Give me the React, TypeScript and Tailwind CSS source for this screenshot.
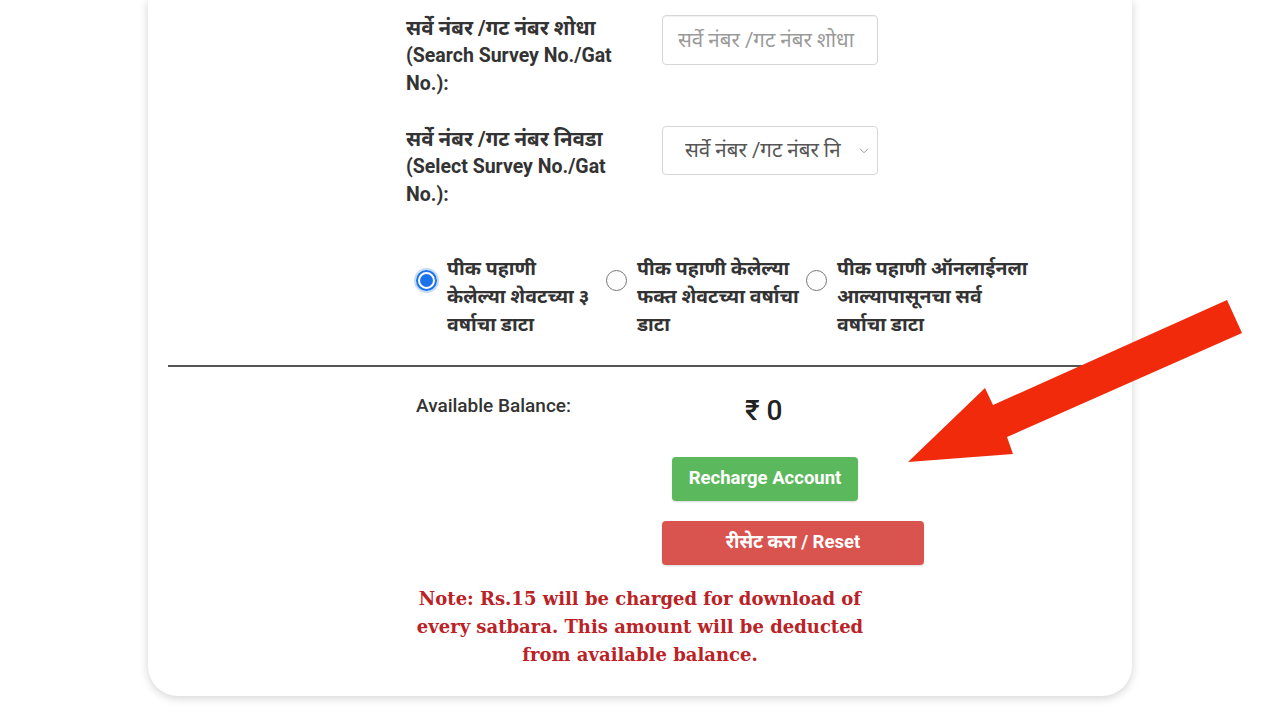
import { ChevronDown } from "lucide-react";

const font = "font-['Roboto','Noto_Sans',sans-serif]";

function Radio({ checked, lines }: { checked?: boolean; lines: string[] }) {
    return (
        <label className="flex flex-row items-start gap-[10px]">
            {checked ? (
                <span className="shrink-0 mt-[15px] w-[21px] h-[21px] rounded-full border-2 border-[#1a73e8] flex items-center justify-center shadow-[0_0_0_2px_#c6dbf7]">
                    <span className="w-[13px] h-[13px] rounded-full bg-[#1a73e8]" />
                </span>
            ) : (
                <span className="shrink-0 mt-[15px] w-[21px] h-[21px] rounded-full border border-[#777] bg-white" />
            )}
            <span className="text-[19.5px] leading-[28px] font-bold text-[#333] whitespace-nowrap">
                {lines.map((l, i) => (
                    <span key={i} className="block">{l}</span>
                ))}
            </span>
        </label>
    );
}

export default function App() {
    return (
        <div className={`relative w-[1280px] h-[720px] overflow-hidden bg-white ${font}`}>
            <div className="mx-auto w-[984px] h-[696px] bg-white rounded-b-[30px] shadow-[0_2px_10px_rgba(0,0,0,0.18)] flex flex-col">
                <div className="flex flex-col gap-[27px] pl-[258px] pt-[14px]">
                    <div className="flex flex-row items-start">
                        <div className="w-[256px] text-[19.5px] leading-[28px] font-bold text-[#333] whitespace-nowrap">
                            <span className="block text-[20.5px]">सर्वे नंबर /गट नंबर शोधा</span>
                            <span className="block">(Search Survey No./Gat</span>
                            <span className="block">No.):</span>
                        </div>
                        <div className="mt-[1px] w-[216px] h-[50px] border border-[#d6d6d6] rounded-[4px] flex items-center px-[15px] text-[20.5px] text-[#9a9a9a] shadow-[inset_0_1px_1px_rgba(0,0,0,0.06)] whitespace-nowrap overflow-hidden">
                            सर्वे नंबर /गट नंबर शोधा
                        </div>
                    </div>
                    <div className="flex flex-row items-start">
                        <div className="w-[256px] text-[19.5px] leading-[28px] font-bold text-[#333] whitespace-nowrap">
                            <span className="block text-[20.5px]">सर्वे नंबर /गट नंबर निवडा</span>
                            <span className="block">(Select Survey No./Gat</span>
                            <span className="block">No.):</span>
                        </div>
                        <div className="mt-[1px] w-[216px] h-[49px] border border-[#d6d6d6] rounded-[4px] flex items-center pl-[22px] pr-[6px] text-[20.5px] text-[#555] whitespace-nowrap overflow-hidden">
                            <span className="flex-1 overflow-hidden">सर्वे नंबर /गट नंबर नि</span>
                            <ChevronDown size={14} strokeWidth={1.5} className="text-[#888] shrink-0" />
                        </div>
                    </div>
                </div>

                <div className="flex flex-row gap-[14px] pl-[268px] mt-[46px]">
                    <div className="w-[176px] shrink-0"><Radio checked lines={["पीक पहाणी", "केलेल्या शेवटच्या ३", "वर्षाचा डाटा"]} /></div>
                    <div className="w-[186px] shrink-0"><Radio lines={["पीक पहाणी केलेल्या", "फक्त शेवटच्या वर्षाचा", "डाटा"]} /></div>
                    <div className="w-[240px] shrink-0"><Radio lines={["पीक पहाणी ऑनलाईनला", "आल्यापासूनचा सर्व", "वर्षाचा डाटा"]} /></div>
                </div>

                <div className="mx-[20px] mt-[26px] h-[2px] bg-[#555]" />

                <div className="flex flex-row items-start pl-[268px] mt-[17px]">
                    <span className="w-[329px] mt-[8px] text-[19px] leading-[28px] font-medium text-[#333]">Available Balance:</span>
                    <span className="mt-[11px] text-[28px] leading-[32px] font-medium text-[#222]">₹ 0</span>
                </div>

                <div className="flex flex-col items-start pl-[514px] mt-[30px] gap-[20px]">
                    <button className="ml-[10px] w-[186px] h-[44px] bg-[#5cb85c] rounded-[4px] text-white font-bold text-[18.5px] shadow-[0_1px_2px_rgba(0,0,0,0.15)]">
                        Recharge Account
                    </button>
                    <button className="w-[262px] h-[44px] bg-[#d9534f] rounded-[4px] text-white font-bold text-[18.5px] shadow-[0_1px_2px_rgba(0,0,0,0.15)]">
                        रीसेट करा / Reset
                    </button>
                </div>

                <p className="mt-[20px] text-center font-['DejaVu_Serif',serif] font-bold text-[18px] leading-[28px] text-[#bb2226]">
                    Note: Rs.15 will be charged for download of<br />
                    every satbara. This amount will be deducted<br />
                    from available balance.
                </p>
            </div>

            <svg className="absolute left-0 top-0" width="1280" height="720" viewBox="0 0 1280 720">
                <polygon
                    points="1227,300 1242,333 1007,437 1013,454 908,462 985,388 993,405"
                    fill="#f02a0a"
                />
            </svg>
        </div>
    );
}
